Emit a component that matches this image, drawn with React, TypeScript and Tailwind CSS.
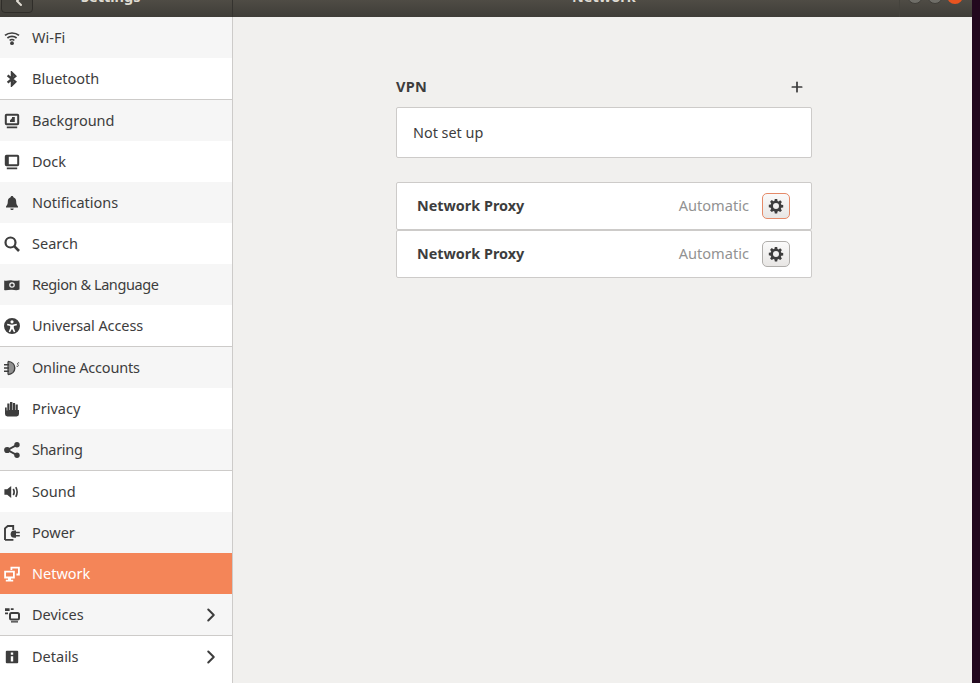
import { ChevronLeft, ChevronRight, Plus } from 'lucide-react';
import type { ReactNode } from 'react';

// symbolic icons, drawn on a 16 unit box like the Yaru set
const icons: Record<string, ReactNode> = {
  wifi: (
    <>
      <path d="M1 5.400C4.800 2.200 11.200 2.200 15 5.400" fill="none" stroke="currentColor" strokeWidth="1.700" />
      <path d="M3.400 8C6 5.900 10 5.900 12.600 8" fill="none" stroke="currentColor" strokeWidth="1.700" />
      <path d="M5.600 10.400C7 9.400 9 9.400 10.400 10.400" fill="none" stroke="currentColor" strokeWidth="1.500" />
      <circle cx="8" cy="13.200" r="1.900" />
    </>
  ),
  bluetooth: (
    <path
      d="M3.600 4.300L11.300 10.900L7.900 14.200V1.800L11.300 5.100L3.600 11.700"
      fill="none"
      stroke="currentColor"
      strokeWidth="2.300"
    />
  ),
  background: (
    <path
      fillRule="evenodd"
      d="M2.500.800h11A1.700 1.700 0 0 1 15.200 2.500v8a1.700 1.700 0 0 1-1.700 1.700h-11A1.700 1.700 0 0 1 .800 10.500v-8A1.700 1.700 0 0 1 2.500.800zM2.800 2.800v7.400h10.400V2.800H2.800zM6 9V7.200L8 5.200V4h2.800v5H6zM2.800 13.400h10.400v1.800H2.800v-1.800z"
    />
  ),
  dock: (
    <path
      fillRule="evenodd"
      d="M2.500.800h11A1.700 1.700 0 0 1 15.200 2.500v8a1.700 1.700 0 0 1-1.700 1.700h-11A1.700 1.700 0 0 1 .800 10.500v-8A1.700 1.700 0 0 1 2.500.800zM4.800 2.800v7.400h8.400V2.800H4.800zM2.800 13.400h10.400v1.800H2.800v-1.800z"
    />
  ),
  bell: (
    <path d="M8 1c.8 0 1.300.5 1.400 1.300C11.200 2.900 12.200 4.500 12.200 6.600c0 2 .4 3.400 1.800 4.800v1.200H2v-1.200c1.400-1.400 1.800-2.800 1.800-4.800 0-2.100 1-3.700 2.800-4.300C6.700 1.500 7.200 1 8 1zM6.300 13.400h3.400C9.600 14.400 8.900 15 8 15s-1.600-.6-1.700-1.600z" />
  ),
  search: (
    <>
      <circle cx="6.500" cy="6.500" r="5" fill="none" stroke="currentColor" strokeWidth="2.200" />
      <path d="M10.200 10.200l4.800 4.800" fill="none" stroke="currentColor" strokeWidth="2.600" />
    </>
  ),
  region: (
    <path
      fillRule="evenodd"
      d="M.200 3.400C2.500 4.400 5 3 8 3.400s5 .8 7.500-.2v9.400c-2.500 1-4.500.6-7.500.2s-5.500 1-7.800.2V3.400zM8 5.200a2.800 2.800 0 1 0 0 5.600 2.800 2.800 0 0 0 0-5.600zm0 1.200a1.600 1.600 0 1 1 0 3.200 1.600 1.600 0 0 1 0-3.200z"
    />
  ),
  access: (
    <path
      fillRule="evenodd"
      d="M8 0a8 8 0 1 1 0 16A8 8 0 0 1 8 0zm0 2.200a1.600 1.600 0 1 0 0 3.200 1.600 1.600 0 0 0 0-3.200zM3.400 5.800l-.4 1.400L6.200 8v2l-1.500 3.700 1.400.5L8 10.800l1.900 3.400 1.400-.5L9.800 10V8L13 7.200l-.4-1.400L8 6.800 3.400 5.800z"
    />
  ),
  online: (
    <>
      <path d="M4 1.400c3.900.3 6.800 3 6.800 6.600s-2.900 6.300-6.800 6.600V1.400z" opacity="0.55" />
      <path d="M4 1.400c3.900.3 6.800 3 6.800 6.600s-2.900 6.300-6.800 6.600" fill="none" stroke="currentColor" strokeWidth="1.400" />
      <path d="M4 1.400v13.200" stroke="currentColor" strokeWidth="1.200" />
      <path d="M0 4.800h5M0 8h5M0 11.200h5" stroke="currentColor" strokeWidth="1.400" />
      <path d="M15.200 3c-.9-.6-1.900 0-1.700 1 .2.700 1 .9.800 1.800-.2.800-1.200.9-1.800.4" fill="none" stroke="currentColor" strokeWidth=".9" />
    </>
  ),
  privacy: (
    <path d="M1 6.500h1.700V9.500H3.300V2.500h2.200V9H6V1h2.400v8h.5V2h2.200v7h.5V3.600h2.200V9l.4 0H15v4a2.400 2.400 0 0 1-2.400 2.400H3.400A2.400 2.400 0 0 1 1 13V6.500z" />
  ),
  share: (
    <>
      <path d="M13 2.800L3.500 8l9.500 5.200" fill="none" stroke="currentColor" strokeWidth="1.900" />
      <circle cx="13" cy="2.800" r="2.700" />
      <circle cx="3.200" cy="8" r="3.100" />
      <circle cx="13" cy="13.200" r="2.700" />
    </>
  ),
  sound: (
    <>
      <path d="M.400 5.300h2.800L7.200 2v12l-4-3.300H.400V5.300z" />
      <path d="M9.300 4.800c1.100 2 1.100 4.400 0 6.400" fill="none" stroke="currentColor" strokeWidth="1.600" />
      <path d="M11.800 3.200c1.600 2.900 1.600 6.700 0 9.600" fill="none" stroke="currentColor" strokeWidth="1.600" />
    </>
  ),
  power: (
    <>
      <path d="M1 15V3.400L3.800 1h5.400v4M9.400 14.900H1" fill="none" stroke="currentColor" strokeWidth="1.900" />
      <path d="M6.600 9.200a3.800 3.800 0 0 1 3.800-3.800H12v7.400h-1.600a3.800 3.800 0 0 1-3.800-3.600z" />
      <path d="M12 6.800h3.800v1.500H12zM12 9.900h3.800v1.500H12z" />
    </>
  ),
  network: (
    <path
      fillRule="evenodd"
      d="M6.500.800h9.300v8.600h-3.400V7.600h1.600V2.600H8.300V4H6.500V.800zM.200 4.800h10.600v7.600H7v1.300h2.200v1.700H1.800v-1.700H4v-1.300H.200V4.800zM2 6.600v4h7v-4H2z"
    />
  ),
  devices: (
    <>
      <path d="M1 1.200h4.600v2.800H1zM6.800 1.200h2.800v1.700H6.800zM1 5.600h3v1.700H1z" />
      <rect x="6" y="6" width="9" height="6.400" rx="1.500" fill="none" stroke="currentColor" strokeWidth="2" />
      <path d="M7 14.200h7v1.300H7z" />
    </>
  ),
  details: (
    <path
      fillRule="evenodd"
      d="M2.800 1.700h10.400a1 1 0 0 1 1 1v10.600a1 1 0 0 1-1 1H2.800a1 1 0 0 1-1-1V2.700a1 1 0 0 1 1-1zM6.800 3.600v2.200h2.400V3.600H6.800zm0 3.600v5.200h2.400V7.200H6.800z"
    />
  ),
};

interface NavItem {
  id: string;
  label: string;
  icon: string;
  shaded?: boolean;
  active?: boolean;
  arrow?: boolean;
  divider?: boolean;
  tight?: string;
}

// tight: the installed font runs a little wider than the original on some labels
const navItems: NavItem[] = [
  { id: 'wifi', label: 'Wi-Fi', icon: 'wifi', shaded: true },
  { id: 'bluetooth', label: 'Bluetooth', icon: 'bluetooth', divider: true },
  { id: 'background', label: 'Background', icon: 'background', shaded: true },
  { id: 'dock', label: 'Dock', icon: 'dock' },
  { id: 'notifications', label: 'Notifications', icon: 'bell', shaded: true },
  { id: 'search', label: 'Search', icon: 'search' },
  { id: 'region', label: 'Region & Language', icon: 'region', shaded: true, tight: 'tracking-[-0.42px]' },
  { id: 'access', label: 'Universal Access', icon: 'access', divider: true, tight: 'tracking-[-0.1px]' },
  { id: 'online', label: 'Online Accounts', icon: 'online', shaded: true, tight: 'tracking-[-0.2px]' },
  { id: 'privacy', label: 'Privacy', icon: 'privacy' },
  { id: 'sharing', label: 'Sharing', icon: 'share', shaded: true, divider: true, tight: 'tracking-[-0.3px]' },
  { id: 'sound', label: 'Sound', icon: 'sound' },
  { id: 'power', label: 'Power', icon: 'power', shaded: true },
  { id: 'network', label: 'Network', icon: 'network', active: true },
  { id: 'devices', label: 'Devices', icon: 'devices', shaded: true, arrow: true, divider: true },
  { id: 'details', label: 'Details', icon: 'details', arrow: true },
];

function SideRow({ item }: { item: NavItem }) {
  const bg = item.active ? 'bg-[#f48558] text-white' : item.shaded ? 'bg-[#f6f6f6] text-[#3d3d3d]' : 'bg-white text-[#3d3d3d]';
  return (
    <div className={`flex items-center shrink-0 h-[41px] pl-1 pr-[10px] ${bg} ${item.divider ? 'border-b border-[#cdcbc9] h-[42px]' : ''}`}>
      <svg viewBox="0 0 16 16" className="w-[16px] h-[16px] shrink-0" fill="currentColor">
        {icons[item.icon]}
      </svg>
      <span className={`ml-3 flex-1 text-[14.5px] ${item.tight ?? ''}`}>{item.label}</span>
      {item.arrow && <ChevronRight className="w-[22px] h-[22px] text-[#3d3d3d]" strokeWidth={2.2} />}
    </div>
  );
}

function ProxyRow({ focused }: { focused?: boolean }) {
  return (
    <div className="flex items-center h-[48px] pl-5 pr-[21px] bg-white border border-[#cdcbc9] rounded-[2px]">
      <span className="flex-1 text-[14.4px] font-bold text-[#3d3d3d]">Network Proxy</span>
      <span className="text-[14.6px] text-[#929292]">Automatic</span>
      <div
        className={`ml-[13px] w-[28px] h-[26px] flex items-center justify-center rounded-[5px] border bg-gradient-to-b from-[#fafafa] to-[#e8e6e4] ${
          focused ? 'border-[#e58a68]' : 'border-[#b0aeab]'
        }`}
      >
        <svg viewBox="0 0 16 16" className="w-[16px] h-[16px] text-[#3d3d3d]" fill="currentColor">
          <path
            fillRule="evenodd"
            d="M6.800 1h2.400l.3 1.900 1.100.5 1.600-1.100 1.700 1.700-1.100 1.600.5 1.100 1.900.3v2.400l-1.900.3-.5 1.100 1.100 1.600-1.700 1.700-1.600-1.100-1.100.5-.3 1.900H6.800l-.3-1.900-1.100-.5-1.600 1.100-1.700-1.700 1.100-1.600-.5-1.100L.8 9.200V6.800l1.900-.3.5-1.100-1.100-1.600 1.700-1.700 1.600 1.100 1.100-.5.3-1.900zM8 5a3 3 0 1 0 0 6 3 3 0 0 0 0-6z"
          />
        </svg>
      </div>
    </div>
  );
}

export default function App() {
  return (
    <div className="w-[980px] h-[683px] overflow-hidden flex bg-[#22081e] font-['Noto_Sans',sans-serif]">
      <div className="w-[972px] h-full flex flex-col">
        {/* header bar, the screenshot cuts off its top */}
        <div className="h-[17px] shrink-0 flex items-end bg-gradient-to-b from-[#4f4c45] to-[#3f3d38] overflow-hidden text-[#dfdbd2] text-[14.5px] font-bold">
          <div className="w-[233px] h-full shrink-0 relative border-r border-[#35332f]">
            <div className="absolute left-[1px] -top-[12px] w-[32px] h-[25px] border border-[#2f2d29] rounded-[4px] bg-[#45433d] flex items-center justify-center pl-1">
              <ChevronLeft className="w-4 h-4" strokeWidth={3} />
            </div>
            <span className="absolute left-[81px] -top-[14px]">Settings</span>
          </div>
          <div className="flex-1 h-full relative">
            <span className="absolute left-[339px] -top-[14px]">Network</span>
            <div className="absolute right-0 top-0 h-full w-[73px] border-l border-[#45433d] flex justify-end gap-[4px] pr-[9px]">
              <div className="w-[16px] h-[16px] -mt-[12px] rounded-full bg-[#6f6e68] border border-[#3f3d38]" />
              <div className="w-[16px] h-[16px] -mt-[12px] rounded-full bg-[#6f6e68] border border-[#3f3d38]" />
              <div className="w-[16px] h-[16px] -mt-[12px] rounded-full bg-[#e95420]" />
            </div>
          </div>
        </div>

        <div className="flex-1 flex min-h-0">
          <div className="w-[233px] shrink-0 flex flex-col border-r border-[#cdcbc9] bg-white overflow-hidden">
            {navItems.map((item) => (
              <SideRow key={item.id} item={item} />
            ))}
          </div>

          <div className="flex-1 bg-[#f1f0ee] pl-[163px] pt-[60px]">
            <div className="w-[416px]">
              <div className="flex items-center justify-between h-[20px] pr-[7px] mb-[10px] text-[#3d3d3d]">
                <span className="text-[14.5px] font-bold tracking-[0.3px]">VPN</span>
                <Plus className="w-[16px] h-[16px]" strokeWidth={2.6} />
              </div>
              <div className="h-[51px] flex items-center pl-4 bg-white border border-[#cdcbc9] rounded-[2px] text-[14.4px] text-[#3d3d3d]">
                Not set up
              </div>
              <div className="mt-[24px] flex flex-col">
                <ProxyRow focused />
                <ProxyRow />
              </div>
            </div>
          </div>
        </div>
      </div>
    </div>
  );
}
